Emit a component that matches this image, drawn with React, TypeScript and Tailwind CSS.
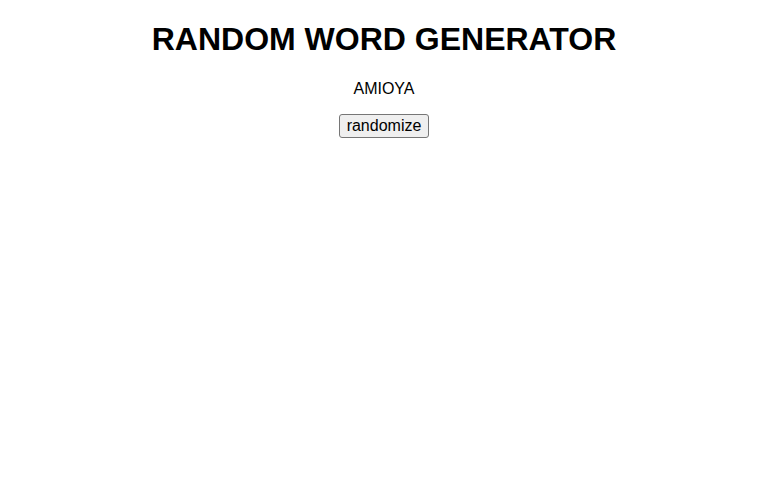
import React, { useState } from 'react';

const LETTERS = 'ABCDEFGHIJKLMNOPQRSTUVWXYZ';

// builds a word of the given length from random capital letters
const makeWord = (len: number) =>
    Array.from({ length: len }, () => LETTERS[Math.floor(Math.random() * LETTERS.length)]).join('');

export default function App() {
    const [word, setWord] = useState('AMIOYA');

    return (
        <div className="flex min-h-screen flex-col items-center bg-white text-black font-['Liberation_Sans',Arial,sans-serif]">
            <h1 className="mt-[21px] mb-[22px] text-[32px] font-bold leading-[37px]">RANDOM WORD GENERATOR</h1>
            <p className="mb-4 text-base leading-[18px]">{word}</p>
            <button
                className="h-6 rounded-[3px] border border-[#767676] bg-[#efefef] px-[7px] text-base leading-[18px] hover:bg-[#e5e5e5]"
                onClick={() => setWord(makeWord(6))}
            >
                randomize
            </button>
        </div>
    );
}
